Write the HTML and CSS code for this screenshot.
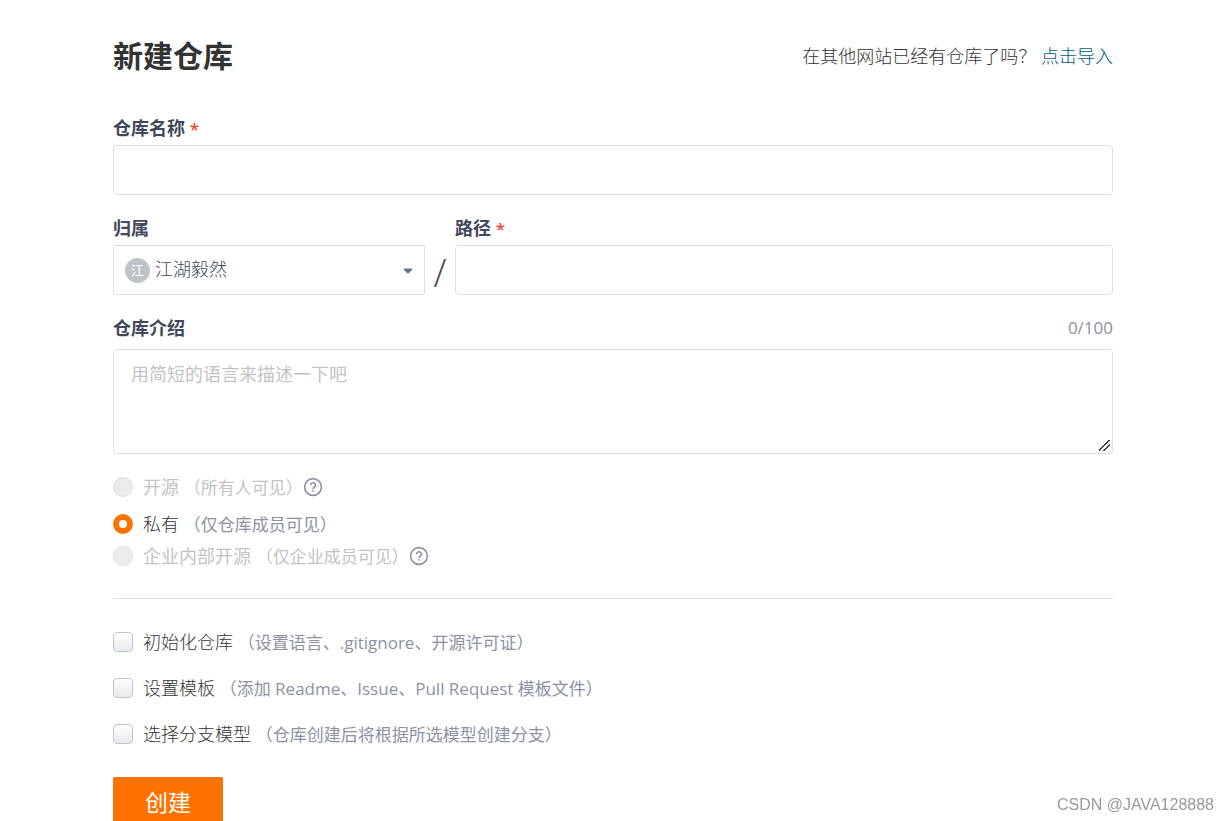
FILE: index.html
```html
<!DOCTYPE html>
<html lang="zh-CN">
<head>
    <meta charset="UTF-8">
    <meta name="viewport" content="width=device-width, initial-scale=1.0">
    <title>新建仓库</title>
    <link rel="stylesheet" href="styles.css">
</head>
<body>
    <main class="container">
        <header class="page-header">
            <h1>新建仓库</h1>
            <p>在其他网站已经有仓库了吗？ <a href="#import">点击导入</a></p>
        </header>

        <form class="project-form">
            <div class="field">
                <label for="name">仓库名称 <span class="required">*</span></label>
                <input type="text" id="name" class="text-input">
            </div>

            <div class="path-row">
                <div class="field">
                    <label for="owner">归属</label>
                    <div class="owner">
                        <span class="avatar">江</span>
                        <select id="owner" class="text-input">
                            <option>江湖毅然</option>
                        </select>
                        <svg class="caret" width="10" height="6" viewBox="0 0 10 6"><path d="M1 0.5h8q.8.3.3 1L5.7 5.2q-.7.6-1.4 0L.7 1.5Q.2.8 1 .5z"/></svg>
                    </div>
                </div>
                <span class="slash">/</span>
                <div class="field">
                    <label for="path">路径 <span class="required">*</span></label>
                    <input type="text" id="path" class="text-input">
                </div>
            </div>

            <div class="field field-desc">
                <div class="label-row">
                    <label for="desc">仓库介绍</label>
                    <span class="counter">0/100</span>
                </div>
                <textarea id="desc" class="text-input" placeholder="用简短的语言来描述一下吧"></textarea>
            </div>

            <div class="radios">
                <div class="option disabled public">
                    <input type="radio" name="visibility" id="public" disabled>
                    <label for="public">开源 <span class="hint">（所有人可见）</span></label>
                    <svg class="help" width="20" height="20" viewBox="0 0 20 20"><circle cx="10" cy="10" r="8.4"/><path d="M7.5 8.2a2.5 2.4 0 1 1 3.8 2q-1.3.8-1.3 2M10 13.2v1.6"/></svg>
                </div>
                <div class="option">
                    <input type="radio" name="visibility" id="private" checked>
                    <label for="private">私有 <span class="hint">（仅仓库成员可见）</span></label>
                </div>
                <div class="option disabled">
                    <input type="radio" name="visibility" id="inner" disabled>
                    <label for="inner">企业内部开源 <span class="hint">（仅企业成员可见）</span></label>
                    <svg class="help" width="20" height="20" viewBox="0 0 20 20"><circle cx="10" cy="10" r="8.4"/><path d="M7.5 8.2a2.5 2.4 0 1 1 3.8 2q-1.3.8-1.3 2M10 13.2v1.6"/></svg>
                </div>
            </div>

            <hr>

            <div class="checks">
                <div class="option">
                    <input type="checkbox" id="init">
                    <label for="init">初始化仓库 <span class="hint">（设置语言、.gitignore、开源许可证）</span></label>
                </div>
                <div class="option">
                    <input type="checkbox" id="template">
                    <label for="template">设置模板 <span class="hint">（添加 Readme、Issue、Pull Request 模板文件）</span></label>
                </div>
                <div class="option">
                    <input type="checkbox" id="branch">
                    <label for="branch">选择分支模型 <span class="hint">（仓库创建后将根据所选模型创建分支）</span></label>
                </div>
            </div>

            <button type="submit" class="btn-create">创建</button>
        </form>
    </main>
    <div class="watermark">CSDN @JAVA128888</div>
</body>
</html>
```

FILE: styles.css
```css
* {
    box-sizing: border-box;
}
body {
    margin: 0;
    background: #fff;
    color: #333;
    font-family: "Open Sans", "Noto Sans CJK SC", sans-serif;
    font-size: 18px;
    font-weight: 300;
    line-height: 26px;
}
input, select, textarea, button {
    margin: 0;
    font: inherit;
}
.container {
    padding: 31px 116px 0 113px;
}
.page-header {
    display: flex;
    justify-content: space-between;
    align-items: center;
    height: 50px;
    margin-bottom: 34px;
}
.page-header h1 {
    margin: 0;
    font-size: 30px;
    font-weight: 700;
}
.page-header p {
    margin: 0;
}
.page-header a {
    color: #005980;
    text-decoration: none;
}

/* fields */
.field {
    display: flex;
    flex-direction: column;
    gap: 4px;
    margin-bottom: 20px;
    color: #40485b;
}
.field label {
    font-weight: 700;
}
.required {
    color: #f44336;
    font-size: 17px;
    font-weight: 600;
    line-height: 1;
}
.text-input {
    width: 100%;
    height: 50px;
    padding: 0 17px;
    border: 1px solid #dce0e6;
    border-radius: 4px;
    background: #fff;
    color: #40485b;
    outline: none;
}
.path-row {
    display: grid;
    grid-template-columns: 312px 30px 1fr;
}
.slash {
    align-self: end;
    margin-bottom: 18px;
    font-size: 38px;
    line-height: 50px;
    text-align: center;
    color: #40485b;
}
.owner {
    position: relative;
}
.owner select {
    display: block;
    appearance: none;
    padding: 0 32px 2px 41px;
    border-radius: 2px;
}
.avatar {
    position: absolute;
    left: 12px;
    top: 13px;
    width: 25px;
    height: 25px;
    border-radius: 50%;
    background: #bdc3c7;
    color: #fff;
    font-size: 13px;
    font-weight: 400;
    line-height: 25px;
    text-align: center;
}
.caret {
    position: absolute;
    right: 12px;
    top: 23px;
    fill: #6b7388;
}
.field-desc {
    gap: 8px;
}
.label-row {
    display: flex;
    justify-content: space-between;
}
.counter {
    color: #8c92a4;
    font-size: 17px;
    font-weight: 400;
}
textarea.text-input {
    display: block;
    height: 105px;
    padding: 11px 17px;
    resize: vertical;
}
textarea::placeholder {
    color: #c3c3c3;
    font-weight: 400;
}
textarea::-webkit-resizer {
    background: linear-gradient(135deg, transparent 44%, #444 44% 53%, transparent 53% 68%, #444 68% 77%, transparent 77%) 2px 2px / 11px 11px no-repeat;
}

/* radios and checkboxes */
.option {
    display: flex;
    align-items: center;
}
.option input {
    appearance: none;
    width: 20px;
    height: 20px;
    margin-right: 10px;
}
.option input[type="radio"] {
    border-radius: 50%;
}
.option input[type="radio"]:disabled {
    background: #ebebeb;
    border: 1px solid #e0e0e0;
}
.option input[type="radio"]:checked {
    border: 6px solid #fe7300;
    background: #fff;
}
.option input[type="checkbox"] {
    border: 1px solid #c0c4cc;
    border-radius: 4px;
    background: linear-gradient(#fff, #e6e9ed);
}
.hint {
    color: #8c92a4;
    font-size: 17px;
    font-weight: 400;
    line-height: 1;
}
.disabled, .disabled .hint {
    color: #c3c3c3;
    font-weight: 400;
}
.help {
    fill: none;
    stroke: #8c92a4;
    stroke-width: 1.6;
}
.radios .option {
    margin-bottom: 6px;
}
.radios .public {
    margin-bottom: 11px;
}
hr {
    height: 1px;
    margin: 29px 0 30px;
    border: 0;
    background: #dce0e6;
}
.checks {
    display: flex;
    flex-direction: column;
    gap: 20px;
    margin-bottom: 30px;
}
.btn-create {
    display: block;
    width: 110px;
    height: 50px;
    border: 0;
    border-radius: 2px;
    background: #fe7300;
    color: #fff;
    font-size: 23px;
    font-weight: 400;
}
.watermark {
    position: fixed;
    right: 15px;
    bottom: 3px;
    color: #999;
    font-family: "Liberation Sans", sans-serif;
    font-size: 16px;
    font-weight: 400;
}
```
